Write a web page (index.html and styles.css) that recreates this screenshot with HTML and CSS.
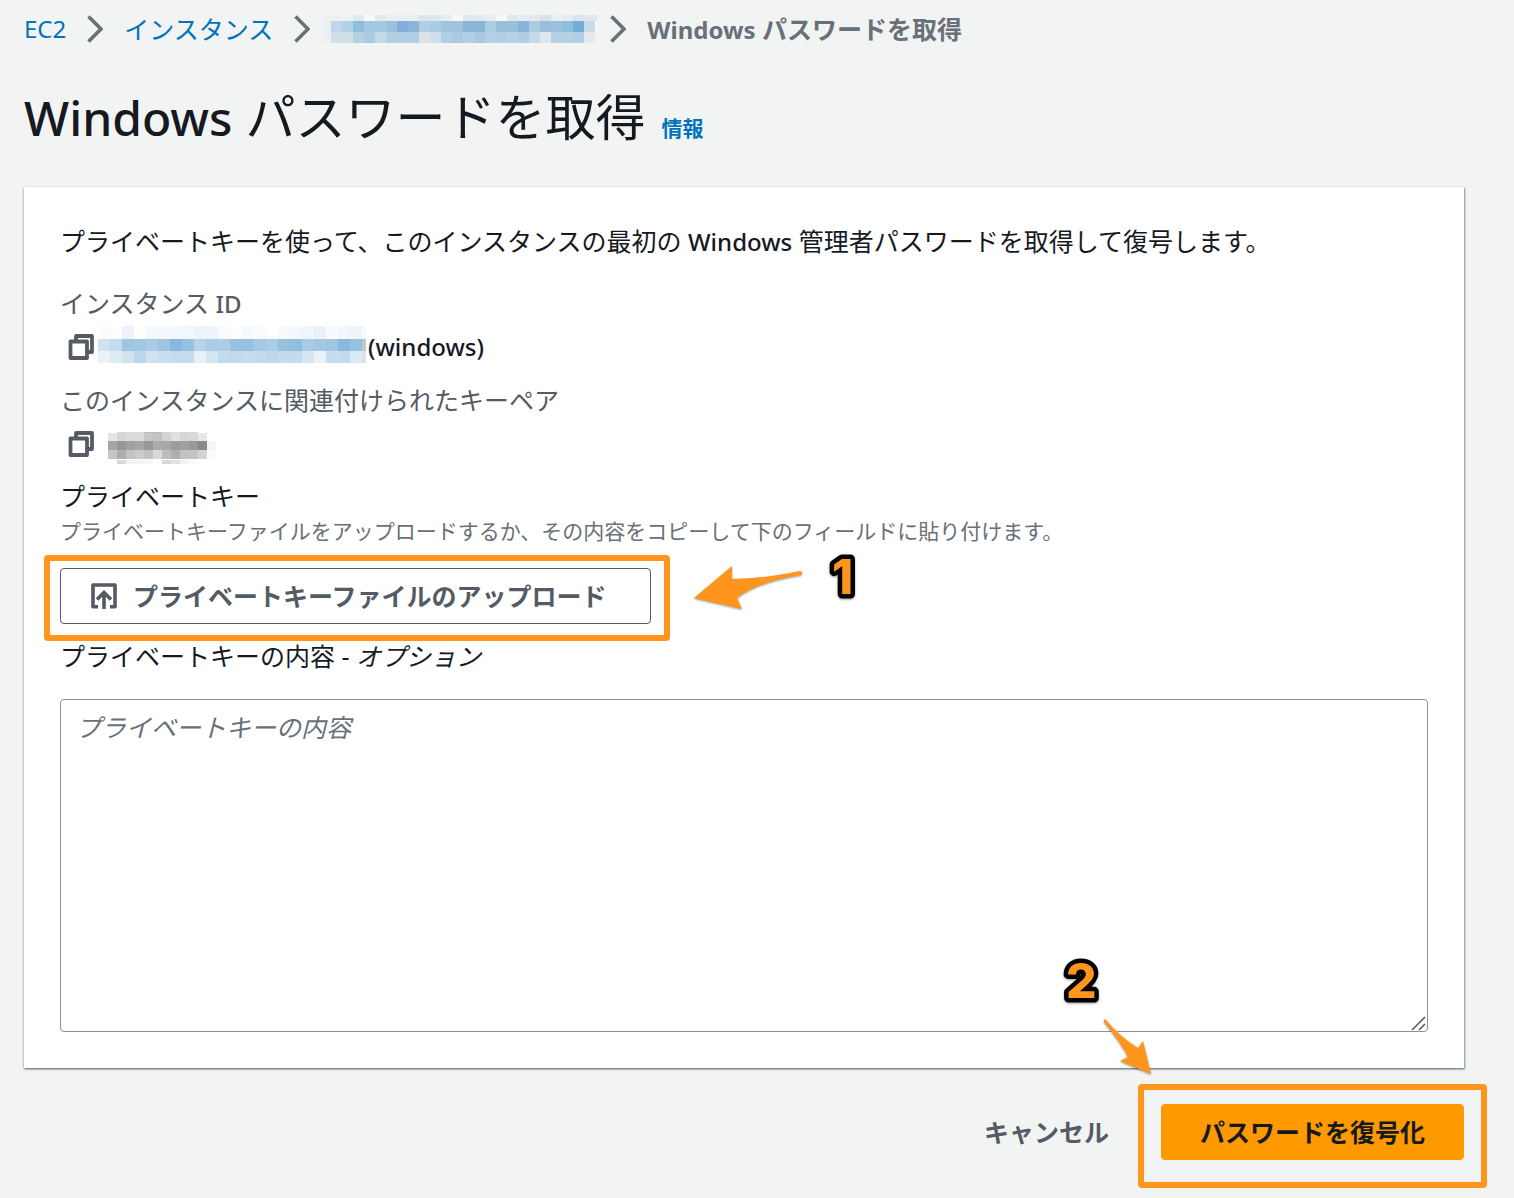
FILE: index.html
```
<!DOCTYPE html>
<html lang="ja">
<head>
    <meta charset="UTF-8">
    <meta name="viewport" content="width=device-width, initial-scale=1.0">
    <title>Windows パスワードを取得</title>
    <link rel="stylesheet" href="styles.css">
</head>
<body>
    <svg class="sprite" aria-hidden="true">
        <symbol id="chevron" viewBox="0 0 16 28">
            <path d="M1.500 1.500 14 14 1.500 26.500" fill="none" stroke="#687078" stroke-width="3.600"/>
        </symbol>
        <symbol id="copy" viewBox="0 0 26 26">
            <path d="M8 6V2h16v16h-4" fill="none" stroke="#545b64" stroke-width="3.800" stroke-linejoin="round"/>
            <path d="M2.500 7.500H19v16.500H2.500z" fill="none" stroke="#545b64" stroke-width="3.800" stroke-linejoin="round"/>
        </symbol>
    </svg>

    <nav class="breadcrumb" aria-label="breadcrumb">
        <a href="#" class="ec2">EC2</a>
        <svg class="chevron"><use href="#chevron"/></svg>
        <a href="#">インスタンス</a>
        <svg class="chevron"><use href="#chevron"/></svg>
        <a href="#" class="mosaic-link" aria-label="インスタンス ID"><svg class="mosaic" id="crumbMosaic"></svg></a>
        <svg class="chevron"><use href="#chevron"/></svg>
        <span class="current"><span class="latin">Windows</span> パスワードを取得</span>
    </nav>

    <header class="page-header">
        <h1><span class="latin">Windows</span> パスワードを取得</h1>
        <a href="#" class="info">情報</a>
    </header>

    <main>
        <section class="card">
            <p class="intro">プライベートキーを使って、このインスタンスの最初の <span class="latin">Windows</span> 管理者パスワードを取得して復号します。</p>

            <dl class="details">
                <dt>インスタンス <span class="latin">ID</span></dt>
                <dd>
                    <button type="button" class="copy-btn" aria-label="コピー"><svg><use href="#copy"/></svg></button>
                    <svg class="mosaic id-mosaic" id="idMosaic"></svg>
                    <span class="name latin">(windows)</span>
                </dd>
                <dt>このインスタンスに関連付けられたキーペア</dt>
                <dd>
                    <button type="button" class="copy-btn" aria-label="コピー"><svg><use href="#copy"/></svg></button>
                    <svg class="mosaic key-mosaic" id="keyMosaic"></svg>
                </dd>
            </dl>

            <h2>プライベートキー</h2>
            <p class="hint">プライベートキーファイルをアップロードするか、その内容をコピーして下のフィールドに貼り付けます。</p>

            <div class="upload">
                <button type="button" class="btn">
                    <svg class="upload-icon" viewBox="0 0 26 26" fill="none" stroke="#545b64" stroke-width="3.600">
                        <path d="M7 23.800H2V2h22v21.800h-5" stroke-linejoin="round"/>
                        <path d="M13 26V10M6 16.500l7-7 7 7"/>
                    </svg>
                    プライベートキーファイルのアップロード
                </button>
                <span class="frame"></span>
                <svg class="callout callout-one" viewBox="0 0 180 70">
                    <path class="arrow" d="M4 50 42 18V31Q72 31 110 23Q114 24 111 27Q67 34 47 50L52 61Z"/>
                    <text x="142" y="46">1</text>
                </svg>
            </div>

            <label for="keyContent">プライベートキーの内容 - <em>オプション</em></label>
            <div class="field">
                <textarea id="keyContent" placeholder="プライベートキーの内容"></textarea>
                <svg class="grip" viewBox="0 0 15 15"><path d="M1 14 14 1M8 14l6-6"/></svg>
            </div>
        </section>

        <div class="actions">
            <button type="button" class="btn btn-link">キャンセル</button>
            <div class="submit">
                <button type="button" class="btn btn-primary">パスワードを復号化</button>
                <span class="frame"></span>
                <svg class="callout callout-two" viewBox="0 0 100 130">
                    <path class="arrow" d="M13 68Q14 66 16 69Q28 84 47 96L52 89 60 122 29 109 37 105Q30 91 13 70Z"/>
                    <text x="-25" y="46">2</text>
                </svg>
            </div>
        </div>
    </main>

    <script src="mosaic.js"></script>
</body>
</html>
```
FILE: styles.css
```
* {
    box-sizing: border-box;
}
body {
    margin: 0;
    padding: 7px 50px 38px 24px;
    background-color: #f2f3f3;
    color: #16191f;
    font-family: "Noto Sans", "Noto Sans CJK JP", sans-serif;
    font-size: 25px;
    line-height: 44px;
}
a {
    color: #0073bb;
    text-decoration: none;
}
h1, h2, p, dl, dd {
    margin: 0;
    font-weight: 400;
}
button, textarea {
    font: inherit;
}
svg {
    display: block;
    flex: none;
}
.sprite {
    position: absolute;
    width: 0;
    height: 0;
}
.breadcrumb {
    display: flex;
    align-items: center;
}
.ec2 {
    font-size: 24px;
}
.chevron {
    width: 16px;
    height: 28px;
    margin: 0 21px;
}
.mosaic-link {
    margin: 0 -8px;
}
.mosaic {
    shape-rendering: crispEdges;
}
.page-header {
    display: flex;
    align-items: baseline;
    gap: 16px;
    margin: 30px 0 34px;
}
h1 {
    font-size: 50px;
    line-height: 72px;
}
.info {
    font-size: 21px;
    line-height: 32px;
    font-weight: 700;
}
.card {
    padding: 32px 36px 36px;
    background-color: #fff;
    box-shadow: 0 1px 2px rgba(0, 28, 36, 0.5), 1px 1px 2px rgba(0, 28, 36, 0.3);
}
.latin {
    font-size: 24px;
    font-weight: 500;
    line-height: 1;
}
h1 .latin {
    font-size: 48px;
}
.current, .current .latin {
    color: #687078;
    font-weight: 700;
}
.details {
    margin-top: 20px;
}
.details dt {
    line-height: 40px;
    color: #545b64;
}
.details dd {
    display: flex;
    align-items: center;
    height: 48px;
    margin-bottom: 9px;
}
.copy-btn {
    width: 30px;
    padding: 0 0 0 8px;
    border: 0;
    background: none;
    margin-right: 8px;
    cursor: pointer;
}
.copy-btn svg {
    width: 26px;
    height: 26px;
}
.name {
    margin-left: 2px;
}
.id-mosaic {
    margin-bottom: 6px;
}
.key-mosaic {
    margin: 8px 0 0 10px;
}
h2 {
    font-size: 25px;
    line-height: 38px;
}
.hint {
    color: #687078;
    font-size: 21px;
    line-height: 32px;
}
.upload, .submit {
    position: relative;
    width: fit-content;
}
.upload {
    margin: 21px 0 10px;
}
.btn {
    display: flex;
    align-items: center;
    gap: 16px;
    height: 56px;
    padding: 0 43px 0 30px;
    border: 1px solid #545b64;
    border-radius: 4px;
    background-color: #fff;
    color: #545b64;
    font-weight: 700;
    white-space: nowrap;
    cursor: pointer;
}
.btn-link {
    padding: 0;
    border-color: transparent;
    background: none;
}
.btn-primary {
    padding: 0 38px;
    border-color: #ff9900;
    background-color: #ff9900;
    color: #16191f;
}
.upload-icon {
    width: 26px;
    height: 26px;
}
/* orange walkthrough marks */
.frame {
    position: absolute;
    inset: -13px -19px -17px -16px;
    border: 6px solid #ff951c;
    border-radius: 4px;
    pointer-events: none;
}
.submit .frame {
    inset: -20px -23px -28px -23px;
}
.callout {
    position: absolute;
    overflow: visible;
    pointer-events: none;
}
.callout-one {
    left: 630px;
    top: -20px;
    width: 180px;
    height: 70px;
}
.callout-two {
    left: -70px;
    top: -152px;
    width: 100px;
    height: 130px;
}
.callout .arrow {
    fill: #ff951c;
    filter: drop-shadow(0 1px 1px rgba(0, 0, 0, 0.4));
}
.callout text {
    fill: #ff951c;
    stroke: #000;
    stroke-width: 9px;
    stroke-linejoin: round;
    paint-order: stroke;
    font-family: Inter, sans-serif;
    font-size: 48px;
    font-weight: 800;
    filter: drop-shadow(0 1px 1px rgba(0, 0, 0, 0.4));
}
label {
    display: block;
    line-height: 44px;
}
.field {
    position: relative;
    margin-top: 21px;
}
textarea {
    display: block;
    width: 100%;
    height: 333px;
    padding: 5px 15px;
    border: 1px solid #879596;
    border-radius: 4px;
    background-color: #fff;
    color: #16191f;
    resize: vertical;
}
textarea::placeholder {
    color: #687078;
    font-style: italic;
}
textarea::-webkit-resizer {
    background: none;
}
.grip {
    position: absolute;
    right: 2px;
    bottom: 1px;
    width: 15px;
    height: 15px;
    fill: none;
    stroke: #555;
    stroke-width: 1.500;
    pointer-events: none;
}
.actions {
    display: flex;
    justify-content: flex-end;
    gap: 51px;
    margin-top: 36px;
}
```
FILE: mosaic.js
```
// each row: y, height, x offset, colours of the cells from left to right
function drawMosaic(id, width, height, cell, rows) {
    const svg = document.getElementById(id);
    svg.setAttribute('width', width);
    svg.setAttribute('height', height);
    rows.forEach(([y, h, x, colours]) => {
        colours.split(' ').forEach((colour, i) => {
            const rect = document.createElementNS('http://www.w3.org/2000/svg', 'rect');
            rect.setAttribute('x', x + i * cell);
            rect.setAttribute('y', y);
            rect.setAttribute('width', Math.min(cell, width - x - i * cell));
            rect.setAttribute('height', h);
            rect.setAttribute('fill', '#' + colour);
            svg.appendChild(rect);
        });
    });
}

drawMosaic('crumbMosaic', 274, 28, 11, [
    [0, 6, 8, 'edf1f2 edf1f2 e1eaee fbf8f4 e1e8ee eaeef1 e9eef1 e9eef1 dbe5eb dde6ec e8edf1 fbf8f4 dfe7ed e3e9ef e8edf1 fbf8f4 dfe8ed e6ebf0 e3e9ef d6e3ea e9eef1 e6ecf1 dbe3ed e1e7ef e1e7ef'],
    [6, 11, 8, 'c0d5e7 b3d1e6 8fbddd a3c8e1 a3c8e1 9cc1df 81b1da 8cb5da b0cfe3 a8cce3 a0c3df a0c3df 8ab5d8 8ab5d8 adcde2 98c0dd 98c0dd 84b5d9 abcbe0 98c0de 9cc1df 8fbddb 73acd6 c8dbe8 fbf8f4'],
    [17, 11, 8, 'd2dfea d0dfe9 b3d0e4 aacbe1 c4d9e8 b3cfe3 b1cfe4 b1cfe4 d9e3e9 cfdfea b0cfe3 a9cae2 b3cfe3 a8cae1 b3d0e5 b0cfe4 b8d3e6 afcde3 c4dae8 e0e7eb b6d1e5 b3d0e5 b0cfe4 e6eaee'],
    [0, 28, -3, 'edf0f1']
]);

drawMosaic('idMosaic', 268, 37, 12, [
    [0, 13, 0, 'fafcfe fefefe ecf3fb ffffff f3f8fc f4f9fc f4f8fc f2f7fc ecf3fb edf4fb fafcfe fdfdfe f6f9fd fafcfe ffffff f7fafd f4f8fc f0f5fb e9f2f9 f8fafd f3f7fc eef5fa f7f9fb'],
    [13, 12, 0, 'd1e2ef c4ddec 9ec5e3 a2c8e4 a9cce6 9dc5e2 87b8dd 97c2e1 b6d3e8 adcde7 adcde7 97c0e1 98c1e1 a5cae4 abcee6 98c1e0 90c0df a9cce4 a2c7e3 9fc5e2 8bb9dd 93c2e1 c3c7cd'],
    [25, 12, 0, 'e9f2f9 dcebf4 d0e3f1 b9d7ed d0e2f0 c8dfef c4dced c5dced e6f1f8 d3e5f3 c2daed c1d9ed c6dced c1daed bcd7ec c4dbed c3dbed d3e6f2 e8f2f8 c7dcee c3dbed dbebf5 dfe1e3']
]);

drawMosaic('keyMosaic', 109, 32, 9, [
    [0, 1, 9, 'd8d8d8 d8d8d8 d8d8d8 b9b9ba b9b9ba d8d8d8 d8d8d8 d8d8d8 d8d8d8'],
    [1, 8, 0, 'e4e5e5 d6d6d7 dadbdb dcdcdd c6c7c8 c2c3c4 d1d2d3 e0e1e1 d5d6d7 d8d8d9 e6e7e7'],
    [9, 9, 0, 'a5a6a7 96979a a0a0a2 a6a6a8 98989b acacad a7a7a9 9b9b9d a0a0a2 98989b 89898d f5f5f6'],
    [18, 9, 0, 'c4c5c6 adaeb0 c1c2c3 cacbcc c2c3c4 d8d8d9 bcbdbf aeafb1 c2c3c4 c2c3c4 d3d4d5 fbfbfb'],
    [28, 4, 9, 'd9d9da f2f2f2 f4f4f4 f8f8f8 fefefe d8d8d9 e2e2e3 f2f2f2 fafafa']
]);
```
